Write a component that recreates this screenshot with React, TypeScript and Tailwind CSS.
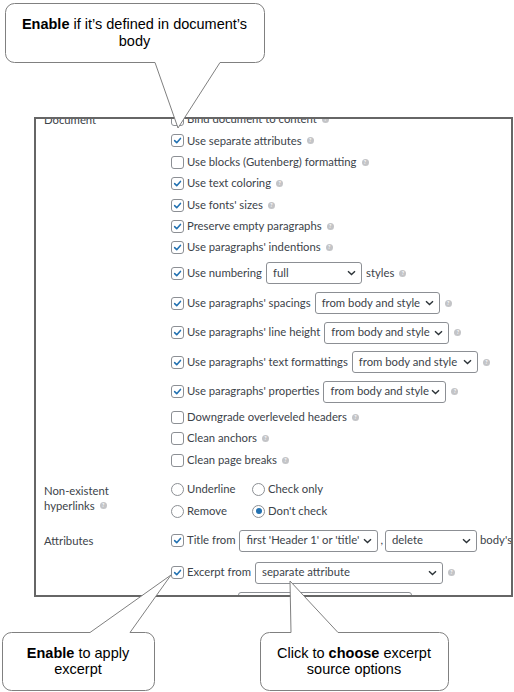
import React from "react";

function Check({ checked }: { checked?: boolean }) {
  return (
    <span className="mr-[3px] inline-flex h-[13px] w-[13px] shrink-0 items-center justify-center rounded-[3px] border border-[#8c8f94] bg-white">
      {checked && (
        <svg viewBox="0 0 20 20" className="h-[13px] w-[13px]">
          <path d="M4.8 10.2 L8.6 14 L15.4 6.2" stroke="#2271b1" strokeWidth="2.8" fill="none" strokeLinecap="round" strokeLinejoin="round" />
        </svg>
      )}
    </span>
  );
}

function Radio({ checked }: { checked?: boolean }) {
  return (
    <span className="mr-[3px] inline-flex h-[13px] w-[13px] shrink-0 items-center justify-center rounded-full border border-[#8c8f94] bg-white">
      {checked && <span className="h-[6px] w-[6px] rounded-full bg-[#2271b1]" />}
    </span>
  );
}

function Help() {
  return (
    <span className="ml-[5px] inline-flex h-[7px] w-[7px] shrink-0 items-center justify-center rounded-full bg-[#c3c4c7] text-[5px] font-bold leading-none text-white">
      ?
    </span>
  );
}

function Chevron() {
  return (
    <svg width="9" height="6" viewBox="0 0 9 6" className="shrink-0">
      <path d="M1 1.2 L4.5 4.6 L8 1.2" stroke="#2c3338" strokeWidth="1.4" fill="none" />
    </svg>
  );
}

function Select({ text, className }: { text: string; className: string }) {
  return (
    <span
      className={
        "inline-flex h-[22px] shrink-0 items-center justify-between rounded-[3px] border border-[#8c8f94] bg-white pl-[6px] pr-[5px] " +
        className
      }
    >
      <span className="whitespace-nowrap">{text}</span>
      <Chevron />
    </span>
  );
}

function Row({ children }: { children: React.ReactNode }) {
  return <div className="flex h-[13.8px] items-center whitespace-nowrap">{children}</div>;
}

function SRow({ children }: { children: React.ReactNode }) {
  return <div className="flex h-[22px] items-center whitespace-nowrap">{children}</div>;
}

export default function App() {
  return (
    <div className="relative h-[692px] w-[514px] overflow-hidden bg-white">
      {/* screenshot frame */}
      <div className="ml-[34px] mt-[117px] h-[480px] w-[479px] overflow-hidden border-2 border-[#666] font-[Lato,sans-serif] text-[11.3px] text-[#3c434a]">
        <div className="mt-[-6.3px] pl-[8px]">
          {/* Document */}
          <div className="grid grid-cols-[127px_1fr]">
            <div className="leading-[13.8px]">Document</div>
            <div className="flex flex-col gap-[7.6px]">
              <Row><Check /><span>Bind document to content</span><Help /></Row>
              <Row><Check checked /><span>Use separate attributes</span><Help /></Row>
              <Row><Check /><span>Use blocks (Gutenberg) formatting</span><Help /></Row>
              <Row><Check checked /><span>Use text coloring</span><Help /></Row>
              <Row><Check checked /><span>Use fonts' sizes</span><Help /></Row>
              <Row><Check checked /><span>Preserve empty paragraphs</span><Help /></Row>
              <Row><Check checked /><span>Use paragraphs' indentions</span><Help /></Row>
              <SRow>
                <Check checked /><span>Use numbering</span>
                <Select text="full" className="ml-[4px] w-[96px]" />
                <span className="ml-[4px]">styles</span><Help />
              </SRow>
              <SRow>
                <Check checked /><span>Use paragraphs' spacings</span>
                <Select text="from body and style" className="ml-[4px] w-[125px]" /><Help />
              </SRow>
              <SRow>
                <Check checked /><span>Use paragraphs' line height</span>
                <Select text="from body and style" className="ml-[4px] w-[125px]" /><Help />
              </SRow>
              <SRow>
                <Check checked /><span>Use paragraphs' text formattings</span>
                <Select text="from body and style" className="ml-[4px] w-[126px]" /><Help />
              </SRow>
              <SRow>
                <Check checked /><span>Use paragraphs' properties</span>
                <Select text="from body and style" className="ml-[4px] w-[123px]" /><Help />
              </SRow>
              <Row><Check /><span>Downgrade overleveled headers</span><Help /></Row>
              <Row><Check /><span>Clean anchors</span><Help /></Row>
              <Row><Check /><span>Clean page breaks</span><Help /></Row>
            </div>
          </div>

          {/* Non-existent hyperlinks */}
          <div className="mt-[16px] grid grid-cols-[127px_1fr]">
            <div className="leading-[15px]">
              Non-existent
              <br />
              <span className="inline-flex items-center">hyperlinks<Help /></span>
            </div>
            <div className="grid grid-cols-[81px_auto] gap-y-[7.6px]">
              <Row><Radio /><span>Underline</span></Row>
              <Row><Radio /><span>Check only</span></Row>
              <Row><Radio /><span>Remove</span></Row>
              <Row><Radio checked /><span>Don't check</span></Row>
            </div>
          </div>

          {/* Attributes */}
          <div className="mt-[11.7px] grid grid-cols-[127px_1fr]">
            <div className="leading-[22px]">Attributes</div>
            <div className="flex flex-col">
              <SRow>
                <Check checked /><span>Title from</span>
                <Select text="first 'Header 1' or 'title'" className="ml-[4px] w-[139px]" />
                <span className="ml-[2px]">,</span>
                <Select text="delete" className="ml-[2px] w-[92px]" />
                <span className="ml-[3px]">body's</span>
              </SRow>
              <div className="mt-[10px]">
                <SRow>
                  <Check checked /><span>Excerpt from</span>
                  <Select text="separate attribute" className="ml-[4px] w-[188px]" /><Help />
                </SRow>
              </div>
              <div className="mt-[8px]">
                <SRow>
                  <Check /><span className="inline-block w-[47px] overflow-hidden">Tags from</span>
                  <Select text="none" className="ml-[4px] w-[174px]" />
                </SRow>
              </div>
            </div>
          </div>
        </div>
      </div>

      {/* callout shapes */}
      <svg className="pointer-events-none absolute left-0 top-0" width="514" height="692" viewBox="0 0 514 692">
        <path
          d="M14.5,3.5 H255.5 A9,9 0 0 1 264.5,12.5 V53.5 A9,9 0 0 1 255.5,62.5 H220 L178,128 L155,62.5 H14.5 A9,9 0 0 1 5.5,53.5 V12.5 A9,9 0 0 1 14.5,3.5 Z"
          fill="#fff"
          stroke="#808080"
          strokeWidth="1"
        />
        <path
          d="M11.5,632.5 H90 L171,575 L130,632.5 H145.5 A9,9 0 0 1 154.5,641.5 V681.5 A9,9 0 0 1 145.5,690.5 H11.5 A9,9 0 0 1 2.5,681.5 V641.5 A9,9 0 0 1 11.5,632.5 Z"
          fill="#fff"
          stroke="#808080"
          strokeWidth="1"
        />
        <path
          d="M269.5,632.5 H291 L290,581 L338,632.5 H439.5 A9,9 0 0 1 448.5,641.5 V681.5 A9,9 0 0 1 439.5,690.5 H269.5 A9,9 0 0 1 260.5,681.5 V641.5 A9,9 0 0 1 269.5,632.5 Z"
          fill="#fff"
          stroke="#808080"
          strokeWidth="1"
        />
      </svg>

      {/* callout texts */}
      <div className="absolute left-[5px] top-[3px] flex h-[59px] w-[259px] items-center justify-center text-center font-['Liberation_Sans',Arial,sans-serif] text-[14.5px] leading-[16.5px] text-black">
        <div>
          <b>Enable</b> if it’s defined in document’s
          <br />
          body
        </div>
      </div>
      <div className="absolute left-[2px] top-[632px] flex h-[58px] w-[152px] items-center justify-center text-center font-['Liberation_Sans',Arial,sans-serif] text-[14.5px] leading-[16.5px] text-black">
        <div>
          <b>Enable</b> to apply
          <br />
          excerpt
        </div>
      </div>
      <div className="absolute left-[260px] top-[632px] flex h-[58px] w-[188px] items-center justify-center text-center font-['Liberation_Sans',Arial,sans-serif] text-[14.5px] leading-[16.5px] text-black">
        <div>
          Click to <b>choose</b> excerpt
          <br />
          source options
        </div>
      </div>
    </div>
  );
}
